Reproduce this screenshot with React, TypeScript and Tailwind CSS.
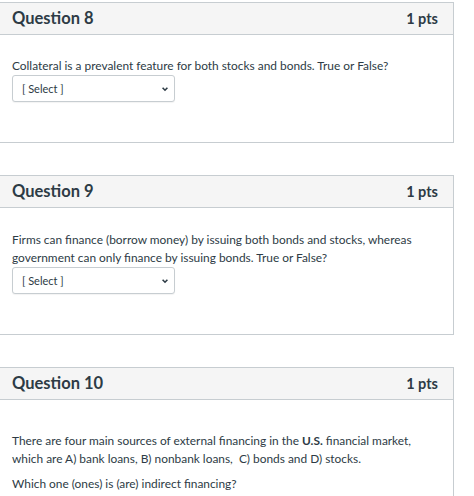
import { ReactNode } from 'react';

function SelectBox() {
  return (
    <div className="flex h-[27px] w-[163px] items-center justify-between rounded-[3px] border border-[#c7cdd1] bg-white pl-[9px] pr-[5px] text-[11px] text-[#2d3b45] shadow-[0_1px_1px_rgba(0,0,0,0.05)]">
      <span>[ Select ]</span>
      <svg className="h-[8px] w-[8px]" viewBox="0 0 10 10" fill="none" stroke="#2d3b45" strokeWidth={2}>
        <polyline points="2 3.5 5 6.5 8 3.5" />
      </svg>
    </div>
  );
}

function QuestionCard({ title, children, bodyClass }: { title: string; children: ReactNode; bodyClass: string }) {
  return (
    <div className="w-[454px] border border-l-0 border-[#c7cdd1] bg-white">
      <div className="flex h-[32px] items-center justify-between border-b border-[#c7cdd1] bg-[#f5f5f5] pl-[12px] pr-[15px] text-[#2d3b45]">
        <span className="text-[16.5px] font-bold">{title}</span>
        <span className="text-[14.5px] font-bold">1 pts</span>
      </div>
      <div className={bodyClass}>{children}</div>
    </div>
  );
}

export default function App() {
  return (
    <div className="min-h-[496px] bg-white pt-[2px] text-[#2d3b45]" style={{ fontFamily: 'Lato, "Noto Sans", sans-serif' }}>
      <div className="flex flex-col gap-[32px]">
        <QuestionCard title="Question 8" bodyClass="px-[12px] pt-[22px] pb-[40px] text-[11.9px] leading-[18px]">
          <p>Collateral is a prevalent feature for both stocks and bonds. True or False?</p>
          <SelectBox />
        </QuestionCard>
        <QuestionCard title="Question 9" bodyClass="px-[12px] pt-[23px] pb-[40px] text-[11.9px] leading-[18px]">
          <p>
            Firms can finance (borrow money) by issuing both bonds and stocks, whereas government can only
            finance by issuing bonds. True or False?
          </p>
          <SelectBox />
        </QuestionCard>
        <QuestionCard title="Question 10" bodyClass="px-[12px] pt-[32px] pb-[40px] text-[11.9px] leading-[18px]">
          <p className="w-[420px]">
            There are four main sources of external financing in the <strong>U.S.</strong> financial market,
            which are A) bank loans, B) nonbank loans,{'\u00a0'} C) bonds and D) stocks.
          </p>
          <p className="mt-[7px]">Which one (ones) is (are) indirect financing?</p>
        </QuestionCard>
      </div>
    </div>
  );
}
